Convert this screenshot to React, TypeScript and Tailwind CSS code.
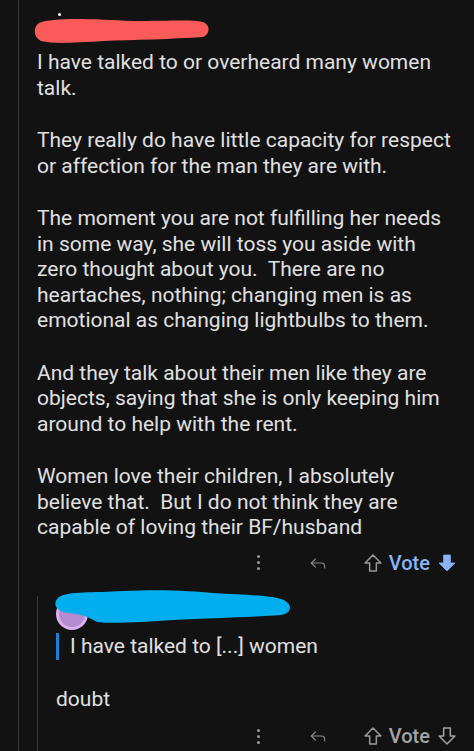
import { Reply } from 'lucide-react';

const PARAGRAPHS = [
  'I have talked to or overheard many women talk.',
  'They really do have little capacity for respect or affection for the man they are with.',
  'The moment you are not fulfilling her needs in some way, she will toss you aside with zero thought about you.\u00a0 There are no heartaches, nothing; changing men is as emotional as changing lightbulbs to them.',
  'And they talk about their men like they are objects, saying that she is only keeping him around to help with the rent.',
  'Women love their children, I absolutely believe that.\u00a0 But I do not think they are capable of loving their BF/husband',
];

function Arrow({ down, filled, color }: { down?: boolean; filled?: boolean; color: string }) {
  return (
    <svg width="20" height="20" viewBox="0 0 24 24" className={down ? 'rotate-180' : ''}>
      <path
        d="M12 2.5 L2.5 12 H8 V21.5 H16 V12 H21.5 Z"
        fill={filled ? color : 'none'}
        stroke={color}
        strokeWidth={filled ? 1 : 1.8}
        strokeLinejoin="round"
      />
    </svg>
  );
}

function Actions({ active }: { active?: boolean }) {
  return (
    <div className="flex items-center justify-end h-[46px] pr-[17px]">
      <div className="flex flex-col gap-[3px] items-center w-[6px] mr-[46px]">
        <span className="w-[3px] h-[3px] rounded-full bg-[#9a9a9a]" />
        <span className="w-[3px] h-[3px] rounded-full bg-[#9a9a9a]" />
        <span className="w-[3px] h-[3px] rounded-full bg-[#9a9a9a]" />
      </div>
      <Reply size={20} strokeWidth={1.4} color="#8c8c8c" className="mr-[35px]" />
      <Arrow color="#9a9a9a" />
      <span
        className={`ml-[6px] mr-[7px] text-[20px] font-medium ${active ? 'text-[#8ab4f8]' : 'text-[#a4a4a4]'}`}
      >
        Vote
      </span>
      <Arrow down filled={active} color={active ? '#8ab4f8' : '#a4a4a4'} />
    </div>
  );
}

export default function App() {
  return (
    <div
      className="w-[474px] h-[751px] overflow-hidden bg-[#121212] text-[#e0e0e0]"
      style={{ fontFamily: 'Roboto, "Noto Sans", sans-serif' }}
    >
      <div className="ml-[18px] border-l border-[#3a3a3a] h-full pl-[18px]">
        {/* Header (redacted) */}
        <div className="h-[50px] relative">
          <span className="absolute left-[21px] top-[13px] w-[3px] h-[3px] rounded-full bg-white" />
          <svg width="180" height="32" viewBox="0 0 180 32" className="absolute left-[-4px] top-[13px]">
            <path
              d="M6 10 C20 4 60 6 100 8 C140 8 165 6 172 10 C178 14 176 22 170 24 C140 26 100 27 70 28 C40 30 20 31 8 28 C0 24 0 14 6 10 Z"
              fill="#fb5a5b"
            />
          </svg>
        </div>

        {/* Body */}
        <div className="text-[21px] leading-[25.5px] pr-[16px]">
          {PARAGRAPHS.map((p, i) => (
            <p key={i} className="mb-[27px] last:mb-0">
              {p}
            </p>
          ))}
        </div>

        <div className="mt-[-1px]">
          <Actions active />
        </div>

        {/* Reply */}
        <div className="border-l border-[#3a3a3a] mt-[10px] pl-[18px] h-[300px] relative">
          <div className="h-[37px] relative">
            <span className="absolute left-[0px] top-[2px] w-[32px] h-[32px] rounded-full bg-[#b48ad0] border-[3px] border-[#dcb0f2]" />
            <svg width="242" height="38" viewBox="0 0 242 38" className="absolute left-[-3px] top-[-9px]">
              <path
                d="M6 10 C16 4 40 6 70 4 C110 2 140 4 160 6 C190 8 215 8 228 12 C240 16 240 26 228 28 C200 30 160 31 120 33 C90 35 60 37 44 35 C36 30 28 27 16 26 C2 25 -1 16 6 10 Z"
                fill="#03aeef"
              />
            </svg>
          </div>
          <div className="border-l-[3px] border-[#1f7fd1] pl-[11px] text-[21px] leading-[27px]">
            I have talked to [...] women
          </div>
          <p className="text-[21px] leading-[25.5px] mt-[27px]">doubt</p>
          <div className="mt-[1px]">
            <Actions />
          </div>
        </div>
      </div>
    </div>
  );
}
